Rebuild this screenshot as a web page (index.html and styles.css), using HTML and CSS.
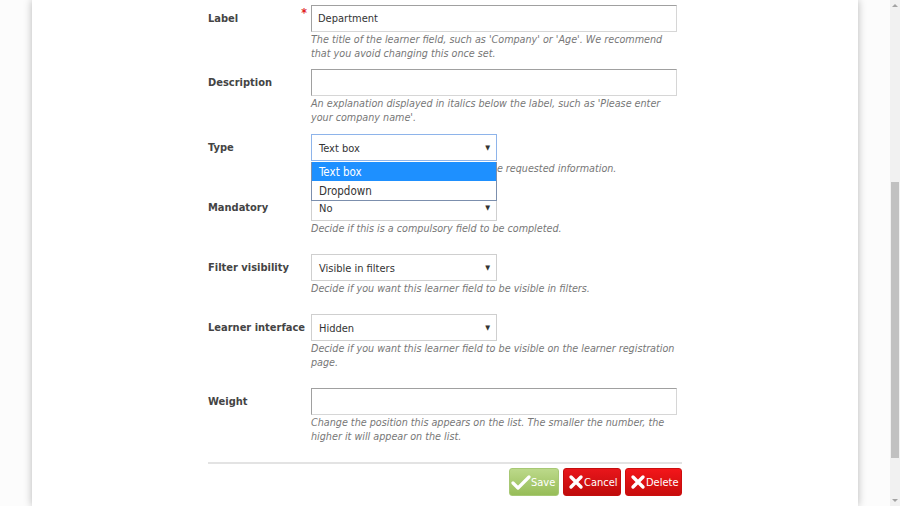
FILE: index.html
```html
<!DOCTYPE html>
<html>
<head>
<meta charset="utf-8">
<link rel="stylesheet" href="styles.css">
</head>
<body>
<div class="viewport">
  <div class="modal">
    <form class="form">
      <div class="row tight">
        <div class="label"><span>Label</span><span class="req">*</span></div>
        <div class="field">
          <div class="input text">Department</div>
          <div class="help">The title of the learner field, such as 'Company' or 'Age'. We recommend that you avoid changing this once set.</div>
        </div>
      </div>
      <div class="row tight2">
        <div class="label"><span>Description</span></div>
        <div class="field">
          <div class="input text"></div>
          <div class="help">An explanation displayed in italics below the label, such as 'Please enter your company name'.</div>
        </div>
      </div>
      <div class="row">
        <div class="label"><span>Type</span></div>
        <div class="field">
          <div class="selectwrap">
            <div class="input select focus"><span>Text box</span><span class="arrow">&#9660;</span></div>
            <div class="popup">
              <div class="opt sel">Text box</div>
              <div class="opt">Dropdown</div>
            </div>
          </div>
          <div class="help">Choose how the learner will provide the requested information.</div>
        </div>
      </div>
      <div class="row">
        <div class="label"><span>Mandatory</span></div>
        <div class="field">
          <div class="input select"><span>No</span><span class="arrow">&#9660;</span></div>
          <div class="help">Decide if this is a compulsory field to be completed.</div>
        </div>
      </div>
      <div class="row">
        <div class="label"><span>Filter visibility</span></div>
        <div class="field">
          <div class="input select"><span>Visible in filters</span><span class="arrow">&#9660;</span></div>
          <div class="help">Decide if you want this learner field to be visible in filters.</div>
        </div>
      </div>
      <div class="row">
        <div class="label"><span>Learner interface</span></div>
        <div class="field">
          <div class="input select"><span>Hidden</span><span class="arrow">&#9660;</span></div>
          <div class="help">Decide if you want this learner field to be visible on the learner registration page.</div>
        </div>
      </div>
      <div class="row last">
        <div class="label"><span>Weight</span></div>
        <div class="field">
          <div class="input text"></div>
          <div class="help">Change the position this appears on the list. The smaller the number, the higher it will appear on the list.</div>
        </div>
      </div>
      <div class="divider"></div>
      <div class="actions">
        <button type="button" class="btn save"><svg width="20" height="16" viewBox="0 0 20 16"><path d="M2 9 L7 14 L18 3" fill="none" stroke="#fff" stroke-width="3.2" stroke-linecap="round" stroke-linejoin="round"/></svg>Save</button>
        <button type="button" class="btn cancel"><svg width="16" height="16" viewBox="0 0 16 16"><path d="M3 3 L13 13 M13 3 L3 13" fill="none" stroke="#fff" stroke-width="3.4" stroke-linecap="round"/></svg>Cancel</button>
        <button type="button" class="btn delete"><svg width="16" height="16" viewBox="0 0 16 16"><path d="M3 3 L13 13 M13 3 L3 13" fill="none" stroke="#fff" stroke-width="3.4" stroke-linecap="round"/></svg>Delete</button>
      </div>
    </form>
  </div>
</div>
<div class="scrollbar">
  <div class="sb-arrow up"></div>
  <div class="sb-thumb"></div>
  <div class="sb-arrow down"></div>
</div>
</body>
</html>
```

FILE: styles.css
```css
html, body {
  margin: 0;
  padding: 0;
  height: 506px;
  overflow: hidden;
}
body {
  display: flex;
  background: #fcfcfc;
  font-family: "DejaVu Sans Condensed", "DejaVu Sans", Verdana, sans-serif;
  font-size: 11px;
  color: #333;
}
.viewport {
  flex: 1;
  padding: 0 32px;
  height: 506px;
  overflow: hidden;
}
.modal {
  background: #fff;
  height: 100%;
  box-shadow: 0 0 8px rgba(0,0,0,0.28);
  display: flex;
  justify-content: center;
}
.form {
  width: 474px;
  padding-top: 5px;
}
.row {
  display: flex;
  margin-bottom: 18px;
}
.row.tight { margin-bottom: 8px; }
.row.tight2 { margin-bottom: 9px; }
.row.last { margin-bottom: 18px; }
.label {
  width: 103px;
  flex: none;
  display: flex;
  justify-content: space-between;
  align-items: flex-start;
  font-weight: bold;
  color: #444;
  line-height: 27px;
  font-size: 11px;
  white-space: nowrap;
}
.req {
  color: #e02020;
  font-weight: bold;
  font-size: 12px;
  line-height: 12px;
  margin-top: 2px;
  margin-right: 4px;
}
.field {
  flex: 1;
}
.input {
  box-sizing: border-box;
  height: 27px;
  background: #fff;
  color: #333;
  display: flex;
  align-items: center;
  font-size: 11px;
}
.input.text {
  width: 366px;
  border: 1px solid;
  border-color: #a0a0a0 #d6d6d6 #d6d6d6 #a0a0a0;
  padding-left: 6px;
}
.input.select {
  width: 186px;
  border: 1px solid #cfcfcf;
  padding: 1px 6px 0 7px;
  justify-content: space-between;
}
.input.select.focus {
  border-color: #8eb4ea;
}
.arrow {
  font-size: 7px;
  color: #333;
}
.selectwrap {
  position: relative;
}
.popup {
  position: absolute;
  left: 0;
  top: 28px;
  width: 186px;
  box-sizing: border-box;
  border: 1px solid #7c8fad;
  border-top: none;
  background: #fff;
  z-index: 5;
}
.opt {
  box-sizing: border-box;
  height: 19px;
  line-height: 19px;
  padding: 1px 0 0 7px;
  font-size: 11.5px;
  color: #333;
}
.opt.sel {
  background: #1e90ff;
  color: #fff;
}
.help {
  width: 372px;
  padding-top: 1px;
  font-style: italic;
  color: #777;
  line-height: 14px;
  font-size: 10.7px;
}
.divider {
  height: 2px;
  background: #e3e3e3;
  margin-top: 0;
}
.actions {
  display: flex;
  justify-content: flex-end;
  gap: 4px;
  margin-top: 4px;
}
.btn {
  height: 28px;
  box-sizing: border-box;
  border-radius: 3px;
  border: 1px solid;
  padding: 0 3px 0 4px;
  display: flex;
  align-items: center;
  font-family: "DejaVu Sans Condensed", "DejaVu Sans", Verdana, sans-serif;
  font-size: 11px;
  color: #fff;
  cursor: pointer;
}
.btn svg { flex: none; }
.btn.save {
  width: 50px;
  background: linear-gradient(#bcd98a, #97bd58);
  border-color: #a7c874;
  padding-left: 1px;
}
.btn.cancel {
  width: 58px;
  background: linear-gradient(#e8161b, #bf0b0b);
  border-color: #c40d0d;
}
.btn.delete {
  width: 57px;
  background: linear-gradient(#f3161a, #c80c0c);
  border-color: #cc0e0e;
}
.scrollbar {
  width: 10px;
  flex: none;
  background: #f1f1f1;
  display: flex;
  flex-direction: column;
  align-items: center;
}
.sb-arrow {
  width: 0;
  height: 0;
  border-left: 3px solid transparent;
  border-right: 3px solid transparent;
}
.sb-arrow.up {
  border-bottom: 3px solid #a3a3a3;
  margin-top: 4px;
}
.sb-arrow.down {
  border-top: 3px solid #a3a3a3;
  margin-top: auto;
  margin-bottom: 4px;
}
.sb-thumb {
  width: 8px;
  height: 276px;
  background: #c1c1c1;
  margin-top: 175px;
}
```
